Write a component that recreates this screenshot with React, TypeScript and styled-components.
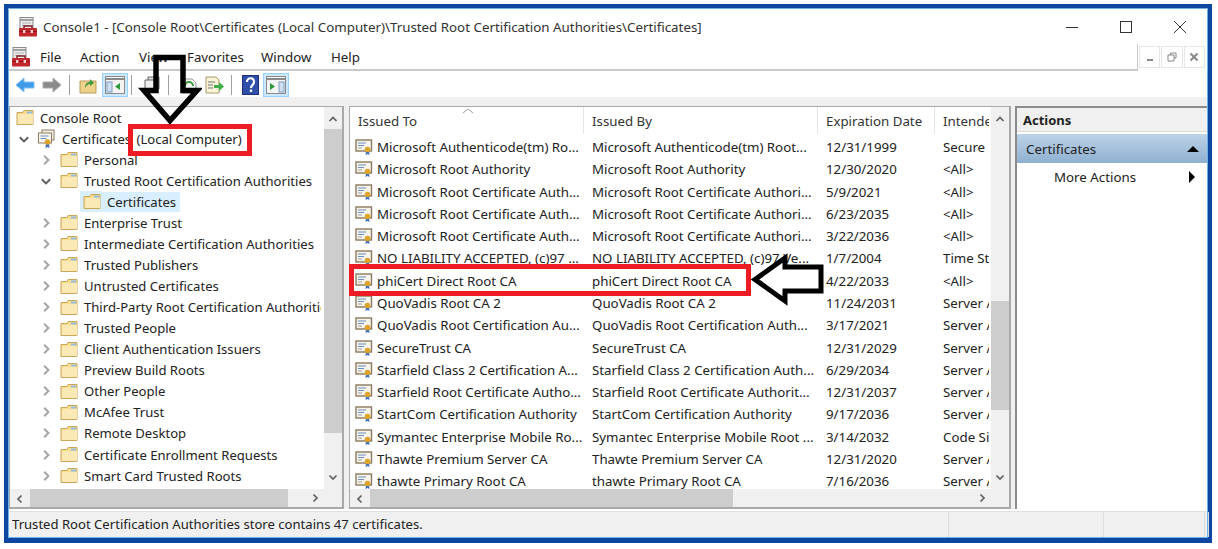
import React from "react";
import styled, { createGlobalStyle } from "styled-components";

const GlobalStyle = createGlobalStyle`
  html, body {
    margin: 0;
    padding: 0;
    background: #ffffff;
  }
  * {
    box-sizing: border-box;
  }
`;

const Shot = styled.div`
  position: relative;
  width: 1218px;
  height: 549px;
  padding: 4px 6px 6px 4px;
  overflow: hidden;
  font-family: "Noto Sans", "Open Sans", sans-serif;
  font-size: 13.3px;
  color: #222;
`;

const Frame = styled.div`
  height: 100%;
  background: #0d47a1;
  padding: 5px 5px 6px 5px;
`;

const Win = styled.div`
  display: flex;
  flex-direction: column;
  height: 100%;
  background: #fff;
  box-shadow: 0 0 0 1px #6fb1e4;
`;

const TitleBar = styled.div`
  display: flex;
  align-items: center;
  height: 35px;
  padding: 1px 0 0 9px;
  font-size: 13.33px;
  color: #333;
`;

const TitleText = styled.div`
  flex: 1;
  margin-left: 5px;
`;

const WinButton = styled.div`
  display: flex;
  align-items: center;
  justify-content: center;
  width: 54px;
  height: 33px;
`;

const MenuBar = styled.div`
  display: flex;
  height: 27px;
`;

const MenuLeft = styled.div`
  flex: 1;
  display: flex;
  align-items: center;
  padding-left: 2px;
  border-bottom: 2px solid #c9c9c9;
  border-right: 1px solid #c9c9c9;
`;

const MenuGlyph = styled.span`
  display: flex;
  margin-right: 9px;
`;

const MenuItem = styled.span<{ $w: number }>`
  width: ${(p) => p.$w}px;
  font-size: 13.3px;
`;

const MenuButtons = styled.div`
  display: flex;
  width: 69px;
  gap: 1px;
  padding: 2px 2px 2px 1px;
  margin-bottom: 1px;
`;

const MdiButton = styled.div`
  flex: 1;
  display: flex;
  align-items: center;
  justify-content: center;
  border: 1px solid #e6e6e6;
`;

const Toolbar = styled.div`
  display: flex;
  align-items: flex-end;
  height: 26px;
  padding-left: 6px;
`;

const ToolIcon = styled.div<{ $ml?: number; $on?: boolean }>`
  display: flex;
  align-items: center;
  justify-content: center;
  width: ${(p) => (p.$on ? 26 : 20)}px;
  height: 24px;
  margin-left: ${(p) => p.$ml ?? 0}px;
  ${(p) => (p.$on ? "background: #cce8ff; border: 1px solid #99d1ff;" : "")}
`;

const ToolSep = styled.div<{ $ml: number }>`
  width: 1px;
  height: 20px;
  margin: 0 0 2px ${(p) => p.$ml}px;
  background: #a0a0a0;
`;

const Band = styled.div`
  height: 9px;
  background: #f0f0f0;
`;

const Panes = styled.div`
  flex: 1;
  min-height: 0;
  display: flex;
  background: #f0f0f0;
`;

const ScrollPane = styled.div<{ $w: number; $ml?: number }>`
  display: grid;
  grid-template-columns: minmax(0, 1fr) 18px;
  grid-template-rows: minmax(0, 1fr) 18px;
  width: ${(p) => p.$w}px;
  margin-left: ${(p) => p.$ml ?? 0}px;
  border: 1px solid #a9a9a9;
  border-width: 1px 2px 2px 1px;
  background: #fff;
`;

const TreeBody = styled.div`
  overflow: hidden;
  padding-right: 3px;
  font-size: 13.1px;
`;

const TreeRow = styled.div<{ $indent: number }>`
  display: flex;
  align-items: center;
  height: 21.07px;
  padding-left: ${(p) => p.$indent}px;
  white-space: nowrap;
  overflow: hidden;
  & > * {
    flex: none;
  }
`;

const Twist = styled.span<{ $gap?: number }>`
  display: flex;
  justify-content: center;
  width: 14px;
  margin-right: ${(p) => p.$gap ?? 7}px;
`;

const TreeLabel = styled.span<{ $sel?: boolean }>`
  margin-left: 6px;
  padding: 0 4px 0 0;
  ${(p) => (p.$sel ? "background: #d9eeff; margin-left: 0; padding: 1px 4px 1px 6px;" : "")}
`;

const LocalPart = styled.span`
  margin-left: 2px;
`;

const SelFolder = styled.span`
  display: flex;
  align-items: center;
  height: 21px;
  padding-left: 3px;
  background: #d9eeff;
`;

const ListBody = styled.div`
  position: relative;
  overflow: hidden;
`;

const HeaderRow = styled.div`
  display: grid;
  grid-template-columns: 234px 234px 117px 54px;
  height: 29px;
  color: #333;
`;

const HeaderCell = styled.div`
  display: flex;
  align-items: center;
  padding-left: 8px;
  border-right: 1px solid #e4e4e4;
  white-space: nowrap;
  overflow: hidden;
  margin-bottom: 2px;
  &:last-child {
    border-right: 0;
  }
`;

const SortCaret = styled.div`
  position: absolute;
  left: 112px;
  top: 0;
  line-height: 0;
`;

const DataRow = styled.div`
  display: grid;
  grid-template-columns: 234px 234px 117px 54px;
  height: 22.27px;
  align-items: center;
  white-space: nowrap;
`;

const FirstCell = styled.div`
  display: flex;
  align-items: center;
  padding-left: 5px;
  overflow: hidden;
`;

const Cell = styled.div`
  padding-left: 8px;
  overflow: hidden;
`;

const CertLabel = styled.span`
  margin-left: 4px;
`;

const VTrack = styled.div`
  display: flex;
  flex-direction: column;
  padding: 3px 0;
  background: #f0f0f0;
`;

const HTrack = styled.div`
  display: flex;
  background: #f0f0f0;
`;

const ArrowCell = styled.div<{ $end?: boolean; $size: number }>`
  flex: none;
  display: flex;
  align-items: center;
  justify-content: center;
  width: ${(p) => p.$size}px;
  height: ${(p) => p.$size}px;
  ${(p) => (p.$end ? "margin: auto 0 0 auto;" : "")}
`;

const VThumb = styled.div<{ $top: number; $h: number }>`
  flex: none;
  height: ${(p) => p.$h}px;
  margin-top: ${(p) => p.$top}px;
  background: #cdcdcd;
`;

const HThumb = styled.div<{ $w: number }>`
  flex: none;
  width: ${(p) => p.$w}px;
  background: #cdcdcd;
`;

const Corner = styled.div`
  background: #f0f0f0;
`;

const ActionsPane = styled.div`
  flex: 1;
  margin-left: 4px;
  border-left: 2px solid #8c8c8c;
  border-top: 2px solid #8c8c8c;
  background: #fff;
  display: flex;
  flex-direction: column;
`;

const ActionsHead = styled.div`
  display: flex;
  align-items: center;
  height: 24px;
  padding-left: 6px;
  font-weight: 700;
  font-size: 13px;
  background: #f0f0f0;
  border-bottom: 1px solid #dcdcdc;
`;

const ActionsGroup = styled.div`
  display: flex;
  align-items: center;
  justify-content: space-between;
  height: 29px;
  padding: 0 8px 0 9px;
  margin-top: 2px;
  background: linear-gradient(#bdd3e9, #8fb0d0);
`;

const ActionItem = styled.div`
  display: flex;
  align-items: center;
  justify-content: space-between;
  height: 28px;
  padding: 0 11px 0 37px;
`;

const StatusBar = styled.div`
  display: grid;
  grid-template-columns: 940px 155px 101px 1fr;
  height: 26px;
  margin-top: 2px;
  background: #f0f0f0;
  border-top: 1px solid #e0e0e0;
`;

const StatusCell = styled.div`
  display: flex;
  align-items: center;
  padding: 0 0 2px 3px;
  border-right: 1px solid #dcdcdc;
  white-space: nowrap;
  font-size: 13.1px;
`;

const RedBox = styled.div<{ $x: number; $y: number; $w: number; $h: number }>`
  position: absolute;
  left: ${(p) => p.$x}px;
  top: ${(p) => p.$y}px;
  width: ${(p) => p.$w}px;
  height: ${(p) => p.$h}px;
  border: 5px solid #ed1c24;
`;

const Overlay = styled.svg<{ $x: number; $y: number }>`
  position: absolute;
  left: ${(p) => p.$x}px;
  top: ${(p) => p.$y}px;
`;

function Folder() {
  return (
    <svg width="18" height="17" viewBox="0 0 18 17">
      <path d="M1 3.5h6l1-2h9v14H1z" fill="#f8dc8c" stroke="#c9a65a" />
      <path d="M2 5h15v10H2z" fill="#fbe9b5" />
      <path d="M11 2.5h5v2h-5z" fill="#8fbfe6" />
    </svg>
  );
}

function CertIcon({ size = 18 }: { size?: number }) {
  return (
    <svg width={size} height={size} viewBox="0 0 18 18">
      <rect x="1" y="2" width="15.5" height="11" fill="#f6f3ea" stroke="#8c7a5e" strokeWidth="1.4" />
      <path d="M3 5h8M3 7.5h6" stroke="#6d8fc0" strokeWidth="1" />
      <path d="M3 10h4" stroke="#a0a0a0" strokeWidth="1" />
      <path d="M11 13l-.5 4 2-1 2 1-.5-4z" fill="#3a6fc4" />
      <circle cx="12.5" cy="11.5" r="2.8" fill="#dca429" />
    </svg>
  );
}

function StoreIcon() {
  return (
    <svg width="20" height="20" viewBox="0 0 20 20">
      <rect x="6" y="1" width="12" height="10" fill="#f4f1e8" stroke="#8c7a5e" />
      <rect x="2.5" y="4" width="13" height="10" fill="#f8f6ee" stroke="#8c7a5e" />
      <path d="M4.5 7h8M4.5 9.5h6" stroke="#6d8fc0" />
      <path d="M10 14l-.5 5 2-1 2 1-.5-5z" fill="#3a6fc4" />
      <circle cx="11.5" cy="13" r="2.8" fill="#dca429" />
    </svg>
  );
}

function ConsoleIcon() {
  return (
    <svg width="20" height="20" viewBox="0 0 20 20">
      <rect x="2" y="0.5" width="13" height="11" fill="#ececec" stroke="#8a8a8a" />
      <path d="M2 3h13" stroke="#8a8a8a" strokeWidth="1.5" />
      <path d="M4 6h9M4 8.5h6" stroke="#b0b0b0" />
      <path d="M6 11V9h8v2" fill="none" stroke="#7a1f1f" strokeWidth="1.4" />
      <rect x="1" y="11" width="18" height="8.5" rx="1" fill="#c2272d" />
      <path d="M1 14.5h18" stroke="#8e1519" />
      <rect x="5" y="13" width="2.4" height="3" fill="#f0d0d0" />
      <rect x="12.6" y="13" width="2.4" height="3" fill="#f0d0d0" />
    </svg>
  );
}

function Chevron({ dir, size = 10, color = "#606060", weight = 1.7 }: { dir: "up" | "down" | "left" | "right"; size?: number; color?: string; weight?: number }) {
  const paths = {
    up: "M1.5 7L5 3.5 8.5 7",
    down: "M1.5 3.5L5 7 8.5 3.5",
    left: "M6.5 1.5L3 5l3.5 3.5",
    right: "M3.5 1.5L7 5 3.5 8.5",
  };
  return (
    <svg width={size} height={size} viewBox="0 0 10 10">
      <path d={paths[dir]} fill="none" stroke={color} strokeWidth={weight} />
    </svg>
  );
}

function VScroll({ top, height }: { top: number; height: number }) {
  return (
    <VTrack>
      <ArrowCell $size={18}>
        <Chevron dir="up" />
      </ArrowCell>
      <VThumb $top={top} $h={height} />
      <ArrowCell $size={18} $end>
        <Chevron dir="down" />
      </ArrowCell>
    </VTrack>
  );
}

function HScroll({ width }: { width: number }) {
  return (
    <HTrack>
      <ArrowCell $size={20}>
        <Chevron dir="left" />
      </ArrowCell>
      <HThumb $w={width} />
      <ArrowCell $size={18} $end>
        <Chevron dir="right" />
      </ArrowCell>
    </HTrack>
  );
}

const menus: [string, number][] = [
  ["File", 40],
  ["Action", 59],
  ["View", 48],
  ["Favorites", 74],
  ["Window", 70],
  ["Help", 50],
];

const stores = [
  "Enterprise Trust",
  "Intermediate Certification Authorities",
  "Trusted Publishers",
  "Untrusted Certificates",
  "Third-Party Root Certification Authorities",
  "Trusted People",
  "Client Authentication Issuers",
  "Preview Build Roots",
  "Other People",
  "McAfee Trust",
  "Remote Desktop",
  "Certificate Enrollment Requests",
  "Smart Card Trusted Roots",
];

const rows: [string, string, string, string][] = [
  ["Microsoft Authenticode(tm) Ro...", "Microsoft Authenticode(tm) Root...", "12/31/1999", "Secure Email"],
  ["Microsoft Root Authority", "Microsoft Root Authority", "12/30/2020", "<All>"],
  ["Microsoft Root Certificate Auth...", "Microsoft Root Certificate Authori...", "5/9/2021", "<All>"],
  ["Microsoft Root Certificate Auth...", "Microsoft Root Certificate Authori...", "6/23/2035", "<All>"],
  ["Microsoft Root Certificate Auth...", "Microsoft Root Certificate Authori...", "3/22/2036", "<All>"],
  ["NO LIABILITY ACCEPTED, (c)97 ...", "NO LIABILITY ACCEPTED, (c)97 Ve...", "1/7/2004", "Time Stamping"],
  ["phiCert Direct Root CA", "phiCert Direct Root CA", "4/22/2033", "<All>"],
  ["QuoVadis Root CA 2", "QuoVadis Root CA 2", "11/24/2031", "Server Auth"],
  ["QuoVadis Root Certification Au...", "QuoVadis Root Certification Auth...", "3/17/2021", "Server Auth"],
  ["SecureTrust CA", "SecureTrust CA", "12/31/2029", "Server Auth"],
  ["Starfield Class 2 Certification A...", "Starfield Class 2 Certification Auth...", "6/29/2034", "Server Auth"],
  ["Starfield Root Certificate Autho...", "Starfield Root Certificate Authorit...", "12/31/2037", "Server Auth"],
  ["StartCom Certification Authority", "StartCom Certification Authority", "9/17/2036", "Server Auth"],
  ["Symantec Enterprise Mobile Ro...", "Symantec Enterprise Mobile Root ...", "3/14/2032", "Code Signing"],
  ["Thawte Premium Server CA", "Thawte Premium Server CA", "12/31/2020", "Server Auth"],
  ["thawte Primary Root CA", "thawte Primary Root CA", "7/16/2036", "Server Auth"],
];

export default function App() {
  return (
    <Shot>
      <GlobalStyle />
      <Frame>
        <Win>
          <TitleBar>
            <ConsoleIcon />
            <TitleText>Console1 - [Console Root\Certificates (Local Computer)\Trusted Root Certification Authorities\Certificates]</TitleText>
            <WinButton>
              <svg width="12" height="12" viewBox="0 0 12 12">
                <path d="M0 6.5h12" stroke="#333" />
              </svg>
            </WinButton>
            <WinButton>
              <svg width="12" height="12" viewBox="0 0 12 12">
                <rect x="0.5" y="0.5" width="11" height="11" fill="none" stroke="#333" />
              </svg>
            </WinButton>
            <WinButton>
              <svg width="12" height="12" viewBox="0 0 12 12">
                <path d="M0 0l12 12M12 0L0 12" stroke="#333" />
              </svg>
            </WinButton>
          </TitleBar>
          <MenuBar>
            <MenuLeft>
              <MenuGlyph>
                <ConsoleIcon />
              </MenuGlyph>
              {menus.map(([m, w]) => (
                <MenuItem key={m} $w={w}>
                  {m}
                </MenuItem>
              ))}
            </MenuLeft>
            <MenuButtons>
              <MdiButton>
                <svg width="10" height="10" viewBox="0 0 10 10">
                  <path d="M2 8h6" stroke="#888" strokeWidth="2" />
                </svg>
              </MdiButton>
              <MdiButton>
                <svg width="10" height="10" viewBox="0 0 10 10">
                  <path d="M3.5 3V1h5.5v5H7M1 3h6v6H1z" fill="none" stroke="#888" />
                </svg>
              </MdiButton>
              <MdiButton>
                <svg width="10" height="10" viewBox="0 0 10 10">
                  <path d="M1.5 1.5l7 7M8.5 1.5l-7 7" stroke="#888" strokeWidth="2" />
                </svg>
              </MdiButton>
            </MenuButtons>
          </MenuBar>
          <Toolbar>
            <ToolIcon>
              <svg width="20" height="18" viewBox="0 0 20 18">
                <path d="M1 9l8-7v4h10v6H9v4z" fill="#3f9ae8" stroke="#7cc0f5" />
              </svg>
            </ToolIcon>
            <ToolIcon $ml={7}>
              <svg width="20" height="18" viewBox="0 0 20 18">
                <path d="M19 9l-8-7v4H1v6h10v4z" fill="#8a8a8a" stroke="#a8a8a8" />
              </svg>
            </ToolIcon>
            <ToolSep $ml={7} />
            <ToolIcon $ml={8}>
              <svg width="18" height="18" viewBox="0 0 18 18">
                <path d="M1 5h16v12H1z" fill="#eed28a" stroke="#b8995a" />
                <path d="M6 12c0-4 2-6 5-6V3l4 4-4 3V8c-2 0-3 1-5 4z" fill="#3c9a3c" />
              </svg>
            </ToolIcon>
            <ToolIcon $on $ml={4}>
              <svg width="20" height="18" viewBox="0 0 20 18">
                <rect x="0.5" y="0.5" width="19" height="17" fill="#f4f4f4" stroke="#8a8a8a" />
                <path d="M1 3h18" stroke="#8a8a8a" strokeWidth="2" />
                <rect x="2" y="6" width="5" height="10" fill="#cfe0f2" stroke="#7f9cbc" />
                <path d="M15 7v7l-5-3.5z" fill="#2d9a3a" />
              </svg>
            </ToolIcon>
            <ToolSep $ml={3} />
            <ToolIcon $ml={10}>
              <svg width="18" height="18" viewBox="0 0 18 18">
                <path d="M5 1h11v12H5z" fill="#ddd" stroke="#666" />
                <path d="M2 4h11v12H2z" fill="#eee" stroke="#666" />
              </svg>
            </ToolIcon>
            <ToolSep $ml={6} />
            <ToolIcon $ml={10}>
              <svg width="18" height="18" viewBox="0 0 18 18">
                <path d="M2 3h10l4 4v10H2z" fill="#f7f7f7" stroke="#999" />
                <path d="M5 10a4 4 0 0 1 8 0" fill="none" stroke="#3c9a3c" strokeWidth="2" />
              </svg>
            </ToolIcon>
            <ToolIcon $ml={5}>
              <svg width="19" height="18" viewBox="0 0 19 18">
                <path d="M1 1h10l3 3v13H1z" fill="#f9f3d9" stroke="#a89a6a" />
                <path d="M3 6h7M3 9h5M3 12h5" stroke="#777" />
                <path d="M9 9h5V6l5 4.5-5 4.5v-3H9z" fill="#3fae49" />
              </svg>
            </ToolIcon>
            <ToolSep $ml={7} />
            <ToolIcon $ml={8}>
              <svg width="17" height="20" viewBox="0 0 17 20">
                <rect x="0.5" y="0.5" width="16" height="19" fill="#2f4fa8" stroke="#1c2f78" />
                <path d="M5 7c0-5 7-5 7 0 0 3-3 3-3 6" fill="none" stroke="#fff" strokeWidth="2.2" />
                <rect x="7.8" y="14.5" width="2.4" height="2.4" fill="#fff" />
              </svg>
            </ToolIcon>
            <ToolIcon $on $ml={3}>
              <svg width="20" height="18" viewBox="0 0 20 18">
                <rect x="0.5" y="0.5" width="19" height="17" fill="#f4f4f4" stroke="#8a8a8a" />
                <path d="M1 3h18" stroke="#8a8a8a" strokeWidth="2" />
                <rect x="13" y="6" width="5" height="10" fill="#cfe0f2" stroke="#7f9cbc" />
                <path d="M4 7v7l5-3.5z" fill="#2d9a3a" />
              </svg>
            </ToolIcon>
          </Toolbar>
          <Band />
          <Panes>
            <ScrollPane $w={335}>
              <TreeBody>
                <TreeRow $indent={6}>
                  <Folder />
                  <TreeLabel>Console Root</TreeLabel>
                </TreeRow>
                <TreeRow $indent={7}>
                  <Twist $gap={5}>
                    <Chevron dir="down" size={12} />
                  </Twist>
                  <StoreIcon />
                  <TreeLabel>
                    Certificates <LocalPart>(Local Computer)</LocalPart>
                  </TreeLabel>
                </TreeRow>
                <TreeRow $indent={29}>
                  <Twist>
                    <Chevron dir="right" size={12} color="#a6a6a6" />
                  </Twist>
                  <Folder />
                  <TreeLabel>Personal</TreeLabel>
                </TreeRow>
                <TreeRow $indent={29}>
                  <Twist>
                    <Chevron dir="down" size={12} />
                  </Twist>
                  <Folder />
                  <TreeLabel>Trusted Root Certification Authorities</TreeLabel>
                </TreeRow>
                <TreeRow $indent={70}>
                  <SelFolder>
                    <Folder />
                  </SelFolder>
                  <TreeLabel $sel>Certificates</TreeLabel>
                </TreeRow>
                {stores.map((s) => (
                  <TreeRow key={s} $indent={29}>
                    <Twist>
                      <Chevron dir="right" size={12} color="#a6a6a6" />
                    </Twist>
                    <Folder />
                    <TreeLabel>{s}</TreeLabel>
                  </TreeRow>
                ))}
              </TreeBody>
              <VScroll top={1} height={304} />
              <HScroll width={258} />
              <Corner />
            </ScrollPane>
            <ScrollPane $w={662} $ml={5}>
              <ListBody>
                <HeaderRow>
                  <HeaderCell>Issued To</HeaderCell>
                  <HeaderCell>Issued By</HeaderCell>
                  <HeaderCell>Expiration Date</HeaderCell>
                  <HeaderCell>Intended Purposes</HeaderCell>
                </HeaderRow>
                <SortCaret>
                  <svg width="12" height="7" viewBox="0 0 12 7">
                    <path d="M1 6l5-4 5 4" fill="none" stroke="#a0a0a0" />
                  </svg>
                </SortCaret>
                {rows.map((r, i) => (
                  <DataRow key={i}>
                    <FirstCell>
                      <CertIcon />
                      <CertLabel>{r[0]}</CertLabel>
                    </FirstCell>
                    <Cell>{r[1]}</Cell>
                    <Cell>{r[2]}</Cell>
                    <Cell>{r[3]}</Cell>
                  </DataRow>
                ))}
              </ListBody>
              <VScroll top={173} height={109} />
              <HScroll width={363} />
              <Corner />
            </ScrollPane>
            <ActionsPane>
              <ActionsHead>Actions</ActionsHead>
              <ActionsGroup>
                Certificates
                <svg width="12" height="7" viewBox="0 0 12 7">
                  <path d="M0 7l6-6 6 6z" fill="#000" />
                </svg>
              </ActionsGroup>
              <ActionItem>
                More Actions
                <svg width="7" height="12" viewBox="0 0 7 12">
                  <path d="M0 0l6 6-6 6z" fill="#000" />
                </svg>
              </ActionItem>
            </ActionsPane>
          </Panes>
          <StatusBar>
            <StatusCell>Trusted Root Certification Authorities store contains 47 certificates.</StatusCell>
            <StatusCell />
            <StatusCell />
            <StatusCell />
          </StatusBar>
        </Win>
      </Frame>
      <RedBox $x={128} $y={124} $w={124} $h={32} />
      <RedBox $x={349} $y={264} $w={402} $h={32} />
      <Overlay $x={138} $y={52} width="64" height="74" viewBox="0 0 64 74">
        <path d="M18 5.5h27v33h14L32 68.5 6 38.5h12z" fill="none" stroke="#000" strokeWidth="5.5" />
      </Overlay>
      <Overlay $x={748} $y={252} width="76" height="56" viewBox="0 0 76 56">
        <path d="M7 27.5L37 6v9h36v24H37v10z" fill="none" stroke="#000" strokeWidth="5" />
      </Overlay>
    </Shot>
  );
}
